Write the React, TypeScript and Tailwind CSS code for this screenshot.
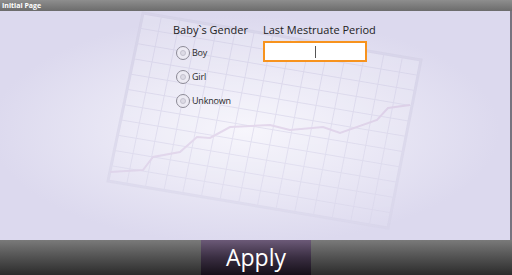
import React from "react";

// corners of the tilted chart picture behind the form
const TL = [143, 13];
const TR = [421, 60];
const BL = [108, 181];
const BR = [388, 228];

const lerp = (a: number[], b: number[], t: number) => [a[0] + (b[0] - a[0]) * t, a[1] + (b[1] - a[1]) * t];
const pt = (u: number, v: number) => {
  const top = lerp(TL, TR, u);
  const bottom = lerp(BL, BR, u);
  return lerp(top, bottom, v);
};

const COLS = 15;
const ROWS = 11;

const trend = [
  [110, 161], [143, 159], [153, 146], [180, 141], [197, 126], [210, 127], [230, 116],
  [270, 114], [290, 119], [323, 116], [340, 122], [377, 109], [388, 97], [410, 94],
];

function Chart() {
  const lines = [];
  for (let i = 0; i <= COLS; i++) {
    const a = pt(i / COLS, 0);
    const b = pt(i / COLS, 1);
    lines.push(<line key={"c" + i} x1={a[0]} y1={a[1] - 11} x2={b[0]} y2={b[1] - 11} />);
  }
  for (let j = 0; j <= ROWS; j++) {
    const a = pt(0, j / ROWS);
    const b = pt(1, j / ROWS);
    lines.push(<line key={"r" + j} x1={a[0]} y1={a[1] - 11} x2={b[0]} y2={b[1] - 11} />);
  }
  return (
    <svg className="absolute inset-0" width="510" height="229" viewBox="0 0 510 229">
      <defs>
        <radialGradient id="glow" cx="48%" cy="52%" r="50%">
          <stop offset="0%" stopColor="#f6f5fc" />
          <stop offset="100%" stopColor="#dcd9ee" />
        </radialGradient>
        <linearGradient id="fade" x1="0" y1="0" x2="0" y2="1">
          <stop offset="0%" stopColor="#fff" stopOpacity="0.85" />
          <stop offset="100%" stopColor="#fff" stopOpacity="0.35" />
        </linearGradient>
        <mask id="m">
          <rect x="0" y="0" width="510" height="229" fill="url(#fade)" />
        </mask>
      </defs>
      <rect x="0" y="0" width="510" height="229" fill="url(#glow)" />
      <g mask="url(#m)">
        <polygon
          points={[TL, TR, BR, BL].map((p) => `${p[0]},${p[1] - 11}`).join(" ")}
          fill="#ffffff"
          fillOpacity="0.2"
          stroke="#d4d1e6"
          strokeWidth="3"
        />
        <g stroke="#d6d3e8" strokeWidth="1">{lines}</g>
        <polyline
          points={trend.map((p) => p.join(",")).join(" ")}
          fill="none"
          stroke="#d8c6e2"
          strokeWidth="2"
        />
      </g>
    </svg>
  );
}

function Radio({ label }: { label: string }) {
  return (
    <div className="flex h-[24px] items-center gap-[2px]">
      <span className="flex h-[14px] w-[14px] items-center justify-center rounded-full border border-[#8c8a96] bg-[#eceaf3]">
        <span className="h-[6px] w-[6px] rounded-full border border-[#c4c2ce] bg-[#dddbe5]" />
      </span>
      <span className="text-[9px] tracking-[-0.2px] text-[#2a2a2a]">{label}</span>
    </div>
  );
}

export default function App() {
  return (
    <div className="flex h-[275px] w-[512px] flex-col overflow-hidden" style={{ fontFamily: '"Open Sans", "DejaVu Sans", sans-serif' }}>
      <div className="flex h-[11px] items-center bg-gradient-to-b from-[#8e8e8e] to-[#6c6c6c] px-[2px]">
        <span className="text-[7px] font-bold leading-none text-white">Initial Page</span>
      </div>
      <div className="relative flex flex-1 border-r-2 border-[#77737f]">
        <Chart />
        <div className="relative flex w-full pt-[11px] pl-[173px]">
          <div className="flex w-[90px] flex-col">
            <div className="text-[11px] leading-[16px] text-[#222]">Baby`s Gender</div>
            <div className="mt-[3px] flex flex-col pl-[3px]">
              <Radio label="Boy" />
              <Radio label="Girl" />
              <Radio label="Unknown" />
            </div>
          </div>
          <div className="flex flex-col">
            <div className="text-[11px] leading-[16px] text-[#222]">Last Mestruate Period</div>
            <div className="mt-[3px] flex h-[21px] w-[104px] items-center justify-center border-2 border-[#f7931e] bg-white">
              <span className="h-[12px] w-px bg-[#555]" />
            </div>
          </div>
        </div>
      </div>
      <div className="flex h-[35px] justify-center bg-gradient-to-b from-[#7a7a7a] to-[#2c2c2c]">
        <button className="flex w-[110px] items-center justify-center bg-gradient-to-b from-[#6c5a78] via-[#3a2e42] to-[#161019] text-[23px] text-white">
          Apply
        </button>
      </div>
    </div>
  );
}
